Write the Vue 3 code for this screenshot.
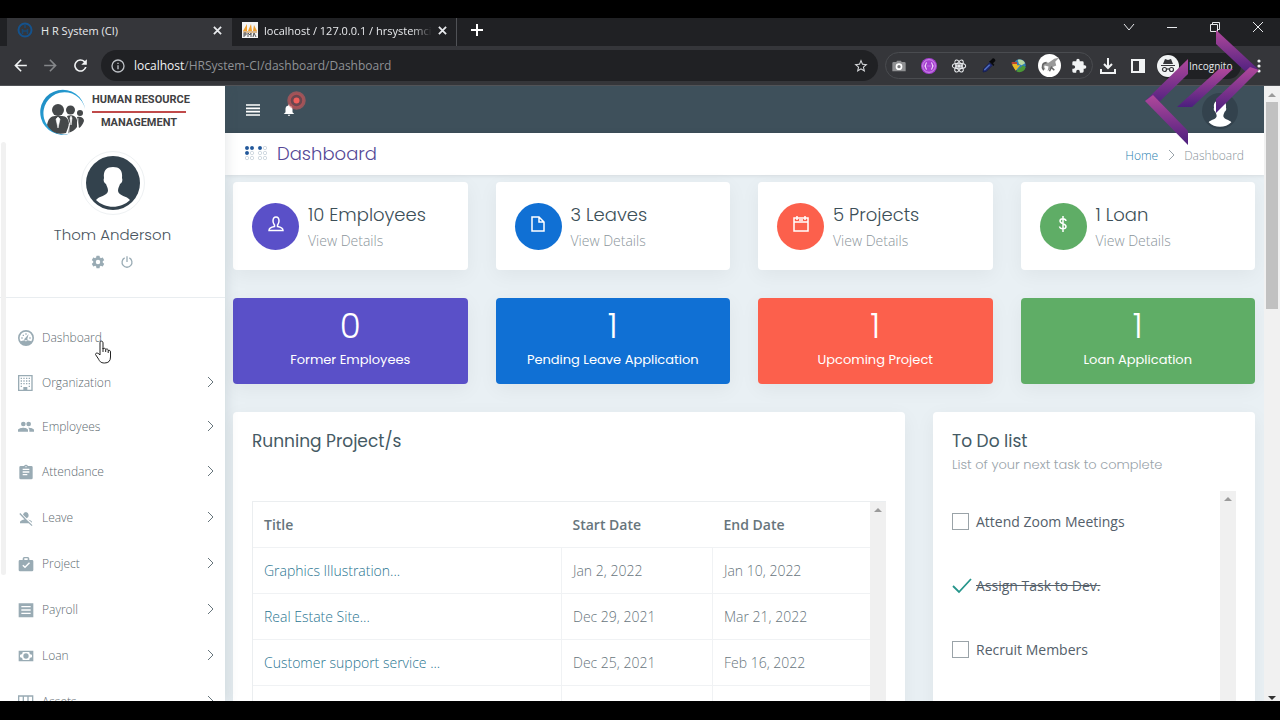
<template>
  <div class="screen">
    <header class="browser">
      <div class="tab-strip">
        <div class="tab tab-active">
          <svg class="favicon" viewBox="0 0 16 16">
            <circle cx="8" cy="8" r="6.5" fill="none" stroke="#15528c" stroke-width="2" />
            <path d="M5.5 12V7M10.5 12V7M5.5 9h5M8 3v3" stroke="#174873" stroke-width="1.6" />
          </svg>
          <span class="tab-title">H R System (CI)</span>
          <button class="tab-close" aria-label="Close tab"><svg viewBox="0 0 10 10"><path d="M1 1l8 8M9 1L1 9" /></svg></button>
        </div>
        <div class="tab tab-second">
          <svg class="favicon" viewBox="0 0 16 16">
            <rect width="16" height="16" fill="#f4f4f4" />
            <path d="M1 9L5 2v7zM6 9l3-7 1 7zM11 9l1-6 3 6z" fill="#f0a030" />
            <path d="M1 10h14" stroke="#c08030" />
            <path d="M2 15v-4h2v2H2M6 15v-4l2 2 1-2v4M11 15l1-4 2 4" fill="none" stroke="#555" />
          </svg>
          <span class="tab-title fading">localhost / 127.0.0.1 / hrsystemci</span>
          <button class="tab-close" aria-label="Close tab"><svg viewBox="0 0 10 10"><path d="M1 1l8 8M9 1L1 9" /></svg></button>
        </div>
        <button class="new-tab" aria-label="New tab"><svg viewBox="0 0 12 12"><path d="M6 0v12M0 6h12" /></svg></button>
        <div class="window-buttons">
          <button aria-label="Search tabs"><svg viewBox="0 0 12 12"><path d="M1 3l5 6 5-6" /></svg></button>
          <button aria-label="Minimize"><svg viewBox="0 0 12 12"><path d="M1 6.5h10" /></svg></button>
          <button aria-label="Restore"><svg viewBox="0 0 12 12"><path d="M1.5 3.5h7v7h-7zM3.5 3.5v-2h7v7h-2" /></svg></button>
          <button aria-label="Close"><svg viewBox="0 0 12 12"><path d="M1 1l10 10M11 1L1 11" /></svg></button>
        </div>
      </div>
      <div class="toolbar">
        <button class="nav-button" aria-label="Back"><svg viewBox="0 0 24 24"><path :d="paths.back" /></svg></button>
        <button class="nav-button muted" aria-label="Forward"><svg viewBox="0 0 24 24"><path :d="paths.forward" /></svg></button>
        <button class="nav-button" aria-label="Reload"><svg viewBox="0 0 24 24"><path :d="paths.reload" /></svg></button>
        <div class="address">
          <svg class="info" viewBox="0 0 24 24"><path :d="paths.info" /></svg>
          <span class="url"><b>localhost</b>/HRSystem-CI/dashboard/Dashboard</span>
          <button class="star" aria-label="Bookmark"><svg viewBox="0 0 24 24"><path :d="paths.star" /></svg></button>
        </div>
        <div class="extensions">
          <button aria-label="Camera">
            <svg viewBox="0 0 24 24"><path d="M4 6h4l1-2h6l1 2h4a2 2 0 0 1 2 2v12H2V8a2 2 0 0 1 2-2z" fill="#8f9092" /><circle cx="12" cy="13" r="5" fill="#fff" /><circle cx="12" cy="13" r="2.5" fill="#77787a" /></svg>
          </button>
          <button aria-label="JSON viewer">
            <svg viewBox="0 0 24 24"><circle cx="12" cy="12" r="12" fill="#a53fd0" /><circle cx="12" cy="12" r="9.500" fill="none" stroke="#e4b8f5" /><path d="M9 7c-3 0-1 4-3 5 2 1 0 5 3 5M15 7c3 0 1 4 3 5-2 1 0 5-3 5M10 12h1M13 12h1" fill="none" stroke="#f3dcfb" stroke-width="1.6" /></svg>
          </button>
          <button aria-label="React tools">
            <svg viewBox="0 0 24 24" fill="none" stroke="#e8eaed" stroke-width="1.6"><ellipse cx="12" cy="12" rx="10" ry="4" /><ellipse cx="12" cy="12" rx="10" ry="4" transform="rotate(60 12 12)" /><ellipse cx="12" cy="12" rx="10" ry="4" transform="rotate(120 12 12)" /><circle cx="12" cy="12" r="2" fill="#e8eaed" /></svg>
          </button>
          <button aria-label="Color picker">
            <svg viewBox="0 0 24 24"><path d="M3 21l1-5 9-9 4 4-9 9z" fill="#202b70" stroke="#111a50" /><path d="M5 18l8-8" stroke="#5272c4" stroke-width="2" /><path d="M12 5l7 7 1-2-2-2 3-3c2-2-2-6-4-4l-3 3z" fill="#08090c" /></svg>
          </button>
          <button aria-label="Download manager">
            <svg viewBox="0 0 24 24"><circle cx="13" cy="11" r="9" fill="#327fb8" /><path d="M10 3c4-2 10 1 11 5l-5 3-4-2z" fill="#b8d9a0" /><path d="M2 7h7v4h5l-7 8-5-8z" fill="#e9b927" /><path d="M8 20l10-9 4 3c-2 7-9 9-14 6z" fill="#4b9936" /><path d="M1 6h8v3H1z" fill="#b94532" /></svg>
          </button>
          <button class="round" aria-label="Gnu extension">
            <svg viewBox="0 0 24 24"><circle cx="12" cy="12" r="12" fill="#fff" /><path d="M5 16c-1-5 1-8 6-7l6-4 5-1-4 4 1 4-5 2-4 4 1-5-4-1c-1 1 0 3 1 4z" fill="#999" /><path d="M6 17c-3-4-1-8 3-8M12 18l2-4 3 3" fill="none" stroke="#666" stroke-width="1.6" /></svg>
          </button>
          <button aria-label="Extensions"><svg viewBox="0 0 24 24" fill="#f1f3f4"><path :d="paths.puzzle" /></svg></button>
        </div>
        <button class="tool" aria-label="Downloads"><svg viewBox="0 0 18 18" fill="none" stroke="#f1f3f4" stroke-width="2"><path d="M9 1v10M5 7l4 4 4-4M2 12v4h14v-4" /></svg></button>
        <button class="tool" aria-label="Side panel"><svg viewBox="0 0 18 18"><path d="M3 3h12v12H3z" fill="none" stroke="#f1f3f4" stroke-width="2" /><path d="M10 3h5v12h-5z" fill="#f1f3f4" /></svg></button>
        <div class="incognito">
          <svg viewBox="0 0 22 22"><circle cx="11" cy="11" r="11" fill="#f1f3f4" /><path d="M4 10h14v1H4zM6 9l2-5 3 1 3-1 2 5z" fill="#35363a" /><g fill="none" stroke="#35363a" stroke-width="1.2"><circle cx="7.500" cy="14.500" r="2" /><circle cx="14.500" cy="14.500" r="2" /><path d="M9.500 14h3" /></g></svg>
          <span>Incognito</span>
        </div>
        <button class="menu-dots" aria-label="Browser menu"><svg viewBox="0 0 4 16"><circle cx="2" cy="3" r="1.6" /><circle cx="2" cy="8" r="1.6" /><circle cx="2" cy="13" r="1.6" /></svg></button>
      </div>
    </header>

    <div class="app">
      <aside class="sidebar">
        <div class="scroll-strip"></div>
        <a class="logo" href="#">
          <svg class="emblem" viewBox="0 0 46 46">
            <defs>
              <linearGradient id="ring" x1="0" y1="0" x2="1" y2="1">
                <stop offset="0" stop-color="#1b86bd" /><stop offset="0.500" stop-color="#2aa3d8" /><stop offset="1" stop-color="#157bb5" />
              </linearGradient>
            </defs>
            <path d="M30 44.500A22.500 22.500 0 1 1 45 20A21 21 0 1 0 30 44.500z" fill="url(#ring)" />
            <g fill="#45484a">
              <path d="M7 36c1-6 4-9 8-9h7c4 0 7 3 7 9l-3 8c-8 2-14 0-19-8z" />
              <circle cx="18" cy="21" r="6" />
              <path d="M27 27c5-2 9 0 10 4v7c-2 3-5 5-9 6l2-9z" />
              <circle cx="30.500" cy="21" r="4.500" />
              <path d="M37 28c4-1 7 1 7 4-1 3-3 6-5 7z" />
              <circle cx="40" cy="24" r="3" />
            </g>
            <path d="M18 28l-2 2 2 9 2-9zM31 27l-1 2 1 7 1-7zM29 35v9M38 29v8" fill="#fff" stroke="#fff" stroke-width="0.600" />
          </svg>
          <span class="logo-text"><b>HUMAN RESOURCE</b><b>MANAGEMENT</b></span>
        </a>
        <div class="profile">
          <div class="ring">
            <svg viewBox="0 0 54 54"><circle cx="27" cy="27" r="27" fill="#33424d" /><path :d="paths.person" fill="#fff" /></svg>
          </div>
          <h5>Thom Anderson</h5>
          <div class="profile-links">
            <a href="#" aria-label="Settings"><svg viewBox="1 1 22 22"><path :d="paths.gear" /></svg></a>
            <a href="#" aria-label="Log out"><svg viewBox="0 0 24 24"><path d="M8 5a8.500 8.500 0 1 0 8 0M12 2v10" fill="none" stroke="#99abb4" stroke-width="2.200" /></svg></a>
          </div>
        </div>
        <nav>
          <a v-for="item in menu" :key="item.label" href="#" :class="{ compact: item.compact }">
            <svg class="menu-icon" viewBox="0 0 24 24" fill-rule="evenodd"><path :d="item.icon" /></svg>
            <span>{{ item.label }}</span>
            <svg v-if="item.sub" class="chevron" viewBox="0 0 10 10"><path d="M3 0l5 5-5 5" /></svg>
          </a>
        </nav>
        <!-- mouse pointer -->
        <svg class="pointer" viewBox="0 0 16 24"><path d="M5 15V3c0-2.500 3-2.500 3 0v6c1-1 2.500-1 2.700 0.500C12 8.500 13 9 13.200 10.500c1.300-0.500 2.300 0 2.300 1.500v5c0 4-2 6-6 6s-5-2-6-4l-3-4.500c0-2 2.500-2 4.500 0.500zM8 8v4M10.700 9.500V12M13.200 10.500V13" fill="#fff" stroke="#222" /></svg>
      </aside>

      <main>
        <div class="topbar">
          <button aria-label="Toggle menu"><svg class="burger" viewBox="0 0 14 12"><path d="M0 1h14M0 4.300h14M0 7.700h14M0 11h14" /></svg></button>
          <button class="bell" aria-label="Notifications">
            <svg class="bell-icon" viewBox="0 0 24 24"><path :d="paths.bell" /></svg>
            <svg class="pulse" viewBox="0 0 19 19">
              <circle cx="9.500" cy="9.500" r="7.500" fill="#8a3f47" fill-opacity="0.600" stroke="#d25a5c" stroke-opacity="0.600" stroke-width="3.500" />
              <circle cx="9.500" cy="9.500" r="3" fill="#ef5f5b" />
            </svg>
          </button>
          <svg class="user" viewBox="0 0 54 54"><circle cx="27" cy="27" r="27" fill="#33424d" /><path :d="paths.person" fill="#fff" /></svg>
        </div>

        <div class="titlebar">
          <svg class="braille" viewBox="0 0 22 16">
            <circle v-for="d in dots" :key="d.x + '-' + d.y" :cx="d.x" :cy="d.y" r="1.700" :class="{ on: d.on }" />
          </svg>
          <h3>Dashboard</h3>
          <div class="crumbs">
            <a href="#">Home</a>
            <svg viewBox="0 0 10 10"><path d="M3 0l5 5-5 5" /></svg>
            <span>Dashboard</span>
          </div>
        </div>

        <div class="content">
          <section v-for="s in stats" :key="s.title" class="card stat">
            <div class="bubble" :class="s.color"><svg viewBox="0 0 16 16"><path :d="s.icon" /></svg></div>
            <div class="stat-text">
              <h3>{{ s.title }}</h3>
              <a href="#">View Details</a>
            </div>
          </section>

          <section v-for="t in tiles" :key="t.label" class="tile" :class="t.color">
            <h1>{{ t.count }}</h1>
            <h6>{{ t.label }}</h6>
          </section>

          <section class="card projects">
            <h4>Running Project/s</h4>
            <div class="scroll-box">
              <table>
                <thead>
                  <tr><th class="col-title">Title</th><th class="col-start">Start Date</th><th>End Date</th></tr>
                </thead>
                <tbody>
                  <tr v-for="p in projects" :key="p.title">
                    <td><a href="#">{{ p.title }}</a></td>
                    <td>{{ p.start }}</td>
                    <td>{{ p.end }}</td>
                  </tr>
                </tbody>
              </table>
              <div class="scrollbar"><i class="arrow-up"></i></div>
            </div>
          </section>

          <section class="card todo">
            <h4>To Do list</h4>
            <p>List of your next task to complete</p>
            <div class="scroll-box">
              <ul>
                <li v-for="(t, i) in todos" :key="t.label">
                  <span class="tick">
                    <input :id="'todo-' + i" v-model="t.done" type="checkbox">
                    <svg v-if="t.done" viewBox="0 0 20 18"><path d="M1 9l6 6L19 2" /></svg>
                  </span>
                  <label :for="'todo-' + i" :class="{ done: t.done }">{{ t.label }}</label>
                </li>
              </ul>
              <div class="scrollbar"><i class="arrow-up"></i></div>
            </div>
          </section>
        </div>
      </main>

      <div class="page-scroll">
        <i class="arrow-up"></i>
        <div class="thumb"></div>
        <i class="arrow-down"></i>
      </div>
    </div>

    <svg class="watermark" viewBox="0 0 114 116">
      <defs>
        <linearGradient id="purple" x1="0" y1="0" x2="0" y2="1">
          <stop offset="0" stop-color="#b0489b" /><stop offset="1" stop-color="#4c1f7e" />
        </linearGradient>
      </defs>
      <g fill="url(#purple)">
        <path d="M71 0L113 39L103 44L71 14z" />
        <path d="M71 69L105 37L114 40L71 83z" />
        <path d="M32 77L74 39H88L47 77z" />
        <path d="M43 29V44L10 76L0 71z" />
        <path d="M0 71L8 65L43 101V115z" />
      </g>
    </svg>
  </div>
</template>

<script setup>
import { ref } from 'vue';

const paths = {
  back: 'M20 11v2H8l5.500 5.500-1.420 1.420L4.160 12l7.920-7.920L13.500 5.500 8 11z',
  forward: 'M4 11v2h12l-5.500 5.500 1.420 1.420L19.840 12l-7.920-7.920L10.500 5.500 16 11z',
  reload: 'M17.650 6.350A8 8 0 1 0 19.730 14h-2.080A6 6 0 1 1 16.220 7.780L13 11h7V4z',
  info: 'M11 9h2V7h-2zM12 20a8 8 0 1 1 0-16 8 8 0 0 1 0 16zM12 2a10 10 0 1 0 0 20 10 10 0 0 0 0-20zM11 17h2v-6h-2z',
  star: 'M12 15.390l-3.760 2.270.990-4.280-3.320-2.880 4.380-.370L12 6.090l1.710 4.040 4.380.370-3.320 2.880.990 4.280M22 9.240l-7.190-.610L12 2 9.190 8.630 2 9.240l5.450 4.730L5.820 21 12 17.270 18.180 21l-1.640-7.030z',
  puzzle: 'M20.500 11H19V7a2 2 0 0 0-2-2h-4V3.500a2.500 2.500 0 0 0-5 0V5H4a2 2 0 0 0-2 2v3.800h1.500a2.700 2.700 0 0 1 0 5.400H2V20a2 2 0 0 0 2 2h3.800v-1.500a2.700 2.700 0 0 1 5.400 0V22H17a2 2 0 0 0 2-2v-4h1.500a2.500 2.500 0 0 0 0-5z',
  bell: 'M14 20a2 2 0 0 1-4 0zM12 2a1 1 0 0 1 1 1v1.080A6 6 0 0 1 18 10v6l3 3H3l3-3v-6a6 6 0 0 1 5-5.920V3a1 1 0 0 1 1-1z',
  person: 'M27 11c-6 0-10 3-9 11-1 2 0 5 2 6 1 3 2 4 2 7-1 5-9 5-12 9 9 9 25 9 34 0-3-4-11-4-12-9 0-3 1-4 2-7 2-1 3-4 2-6 1-8-3-11-9-11z',
  gear: 'M12 15.500A3.500 3.500 0 1 1 12 8.500a3.500 3.500 0 0 1 0 7M19.430 12.970c.040-.320.070-.640.070-.970s-.030-.660-.070-1l2.110-1.630c.190-.150.240-.420.120-.640l-2-3.460c-.120-.220-.390-.310-.610-.220l-2.490 1c-.520-.390-1.060-.730-1.690-.980l-.370-2.650A.500.500 0 0 0 14 2h-4a.500.500 0 0 0-.500.420l-.370 2.650c-.630.250-1.170.590-1.690.980l-2.490-1c-.220-.090-.490 0-.610.220l-2 3.460c-.130.220-.070.490.120.640L4.570 11c-.040.340-.070.670-.070 1s.030.650.070.970l-2.110 1.660c-.190.150-.250.420-.120.640l2 3.460c.120.220.390.300.610.220l2.490-1.010c.520.400 1.060.740 1.690.990l.370 2.650c.040.240.250.420.500.420h4c.250 0 .460-.180.500-.420l.370-2.650c.630-.260 1.170-.590 1.690-.990l2.490 1.010c.220.080.490 0 .610-.220l2-3.460c.120-.220.070-.490-.120-.640z'
};

const menu = [
  {
    label: 'Dashboard',
    icon: 'M12 0a12 12 0 1 0 0 24 12 12 0 0 0 0-24zM12 2.500a9.500 9.500 0 0 1 8 14.500c-5-2-11-2-16 0a9.500 9.500 0 0 1 8-14.500zM11 5h2v2h-2zM5 11h2v2H5zM17 11h2v2h-2zM7 7h2v2H7zM16 6l-2 7a2.500 2.500 0 1 1-3-1z'
  },
  {
    label: 'Organization', sub: true, compact: true,
    icon: 'M0 0h22v24H0zM2 2v20h6v-4h6v4h6V2zM4 4h2v2H4zM8 4h2v2H8zM12 4h2v2h-2zM16 4h2v2h-2zM4 8h2v2H4zM8 8h2v2H8zM12 8h2v2h-2zM16 8h2v2h-2zM4 12h2v2H4zM8 12h2v2H8zM12 12h2v2h-2zM16 12h2v2h-2zM4 16h2v2H4zM16 16h2v2h-2z'
  },
  {
    label: 'Employees', sub: true, compact: true,
    icon: 'M16 13l-.970.050C16.190 13.890 17 15 17 16.500V19h7v-2.500c0-2.330-5.670-3.500-8-3.500M8 13c-2.330 0-8 1.170-8 3.500V19h15v-2.500C15 14.170 10.330 13 8 13M8 11a3.500 3.500 0 1 0 0-7 3.500 3.500 0 0 0 0 7M16 11a3.500 3.500 0 1 0 0-7 3.500 3.500 0 0 0 0 7z'
  },
  {
    label: 'Attendance', sub: true,
    icon: 'M17 9H7V7h10zM17 13H7v-2h10zM14 17H7v-2h7zM12 3a1 1 0 1 1 0 2 1 1 0 0 1 0-2M20 3h-5.180a3 3 0 0 0-5.640 0H4a2 2 0 0 0-2 2v16a2 2 0 0 0 2 2h16a2 2 0 0 0 2-2V5a2 2 0 0 0-2-2z'
  },
  {
    label: 'Leave', sub: true,
    icon: 'M12 3a5 5 0 0 1 1 9.500L7.500 7A5 5 0 0 1 12 3M12.280 14l9.440 9L20.500 24l-4.500-4H3v-2c0-1.840 3.500-3.390 6.870-3.860L2 6l1.500-1.500zM21 18v1.180l-5.860-4.860C18 14.930 21 16.350 21 18z'
  },
  {
    label: 'Project', sub: true,
    icon: 'M10.500 18.500L6.500 14.500l1.500-1.500 2.500 2.500 6-6 1.500 1.500M9.500 3.500h5V6h-5M21 6h-4V4a2.500 2.500 0 0 0-2.500-2.500h-5A2.500 2.500 0 0 0 7 4v2H3a2 2 0 0 0-2 2v13a2 2 0 0 0 2 2h18a2 2 0 0 0 2-2V8a2 2 0 0 0-2-2z'
  },
  {
    label: 'Payroll', sub: true,
    icon: 'M1 2h22v21H1zM5 6v2h14V6zM5 11v2h14v-2zM5 16v2h14v-2z'
  },
  {
    label: 'Loan', sub: true,
    icon: 'M1 4h22v16H1zM3 6v12h18V6zM12 8a4 4 0 1 1 0 8 4 4 0 0 1 0-8M3 6h4a4 4 0 0 1-4 4zM17 6h4v4a4 4 0 0 1-4-4zM3 14a4 4 0 0 1 4 4H3zM21 14v4h-4a4 4 0 0 1 4-4z'
  },
  {
    label: 'Assets', sub: true,
    icon: 'M0 2h23v20H0zM2 4v7h5V4zM9 4v7h5V4zM16 4v7h5V4zM2 13v7h5v-7zM9 13v7h5v-7zM16 13v7h5v-7z'
  }
];

const stats = [
  { title: '10 Employees', color: 'purple', icon: 'M8 1C5 1 5 4 5 5c0 2 1 3 1.500 4v1.500C3 11 1 12 1 14.500h14c0-2.500-2-3.500-5.500-4V9C10 8 11 7 11 5c0-1 0-4-3-4z' },
  { title: '3 Leaves', color: 'blue', icon: 'M2 1h7l5 5v9H2zM9 1v5h5' },
  { title: '5 Projects', color: 'red', icon: 'M1 2h14v13H1zM1 6h14M4 0v4M12 0v4M6 4h4' },
  { title: '1 Loan', color: 'green', icon: 'M11 5c-.500-3-6-3-6 0 0 3.500 6 2 6 5.500 0 3-6 3-6.500 0M8 0v16' }
];

const tiles = [
  { count: 0, label: 'Former Employees', color: 'purple' },
  { count: 1, label: 'Pending Leave Application', color: 'blue' },
  { count: 1, label: 'Upcoming Project', color: 'red' },
  { count: 1, label: 'Loan Application', color: 'green' }
];

const projects = [
  { title: 'Graphics Illustration...', start: 'Jan 2, 2022', end: 'Jan 10, 2022' },
  { title: 'Real Estate Site...', start: 'Dec 29, 2021', end: 'Mar 21, 2022' },
  { title: 'Customer support service ...', start: 'Dec 25, 2021', end: 'Feb 16, 2022' },
  { title: '', start: '', end: '' }
];

const todos = ref([
  { label: 'Attend Zoom Meetings', done: false },
  { label: 'Assign Task to Dev.', done: true },
  { label: 'Recruit Members', done: false }
]);

// braille dots in front of the page title
const dots = [];
[2, 7, 15, 20].forEach((x) => {
  [2, 7, 12].forEach((y) => {
    dots.push({ x, y, on: (y === 2 && x !== 20) || (x === 2 && y === 7) });
  });
});
</script>

<style>
body {
  background: #000;
}
</style>

<style scoped>
* {
  box-sizing: border-box;
}

h1, h3, h4, h5, h6, p, ul {
  margin: 0;
  padding: 0;
  font-weight: 400;
}

h1, h3, h4, h5, h6, p {
  font-family: Poppins, Inter, sans-serif;
}

a {
  text-decoration: none;
}

button {
  display: flex;
  align-items: center;
  justify-content: center;
  flex-shrink: 0;
  padding: 0;
  border: 0;
  background: none;
}

svg {
  display: block;
  flex-shrink: 0;
}

.screen {
  position: relative;
  display: flex;
  flex-direction: column;
  height: 100vh;
  padding: 18px 0 19px;
  overflow: hidden;
  background: #000;
  font-family: "Segoe UI", "Open Sans", sans-serif;
  font-size: 14px;
}

/* browser */
.browser {
  flex-shrink: 0;
  background: #35363a;
  border-bottom: 1px solid #515357;
  color: #e8eaed;
  font-size: 11px;
}

.tab-strip {
  display: flex;
  height: 28px;
  padding: 0 1px 0 7px;
  background: #202124;
}

.tab {
  display: flex;
  align-items: center;
  gap: 8px;
  width: 225px;
  padding: 0 10px 4px;
}

.tab-active {
  background: #35363a;
}

.tab-second {
  gap: 6px;
  border-right: 1px solid #505256;
}

.favicon {
  width: 16px;
  height: 16px;
}

.tab-title {
  flex: 1;
  white-space: nowrap;
}

/* the tail of a long title fades out */
.fading {
  -webkit-mask-image: linear-gradient(90deg, #000 88%, transparent);
  mask-image: linear-gradient(90deg, #000 88%, transparent);
}

.tab-close svg {
  width: 9px;
  height: 9px;
  stroke: #e8eaed;
  stroke-width: 2;
}

.new-tab {
  width: 40px;
  padding-bottom: 4px;
}

.new-tab svg {
  width: 12px;
  height: 12px;
  stroke: #fff;
  stroke-width: 2;
}

.window-buttons {
  display: flex;
  align-items: flex-start;
  margin-left: auto;
}

.window-buttons button {
  width: 43px;
  height: 18px;
}

.window-buttons svg {
  width: 12px;
  height: 12px;
  fill: none;
  stroke: #e8eaed;
}

.toolbar {
  display: flex;
  align-items: center;
  height: 39px;
  padding: 0 11px 0 5px;
}

.nav-button {
  width: 30px;
}

.nav-button svg {
  width: 19px;
  height: 19px;
  fill: #f1f3f4;
}

.muted svg {
  fill: #85878a;
}

.address {
  display: flex;
  flex: 1;
  align-items: center;
  gap: 8px;
  height: 31px;
  margin-left: 6px;
  padding: 0 9px;
  border-radius: 16px;
  background: #202124;
}

.info {
  width: 16px;
  height: 16px;
  fill: #bdc1c6;
}

.url {
  flex: 1;
  color: #8f9296;
  font-size: 12px;
}

.url b {
  color: #f1f3f4;
  font-weight: 400;
}

.star svg {
  width: 16px;
  height: 16px;
  fill: #d5d7da;
}

.extensions {
  display: flex;
  align-items: center;
  justify-content: center;
  width: 208px;
  height: 27px;
  margin-left: 7px;
  border: 1px solid #4a4c50;
  border-radius: 14px;
}

.extensions button {
  width: 30px;
}

.extensions svg {
  width: 16px;
  height: 16px;
}

.extensions .round svg {
  width: 23px;
  height: 23px;
}

.tool {
  width: 30px;
}

.tool svg {
  width: 18px;
  height: 18px;
}

.incognito {
  display: flex;
  align-items: center;
  gap: 10px;
  width: 84px;
  height: 26px;
  margin-left: 4px;
  border-radius: 13px;
  background: #202124;
}

.incognito svg {
  width: 22px;
  height: 22px;
}

.incognito span {
  font-size: 10px;
}

.menu-dots {
  width: 20px;
  margin-left: 8px;
}

.menu-dots svg {
  width: 4px;
  height: 16px;
  fill: #f1f3f4;
}

/* sidebar */
.app {
  display: flex;
  flex: 1;
  min-height: 0;
  overflow: hidden;
}

.sidebar {
  position: relative;
  z-index: 1;
  flex: 0 0 225px;
  background: #fff;
  box-shadow: 1px 0 12px rgba(60, 80, 90, 0.15);
}

.scroll-strip {
  position: absolute;
  top: 56px;
  left: 1px;
  width: 5px;
  height: 433px;
  border-radius: 3px;
  background: #f1f1f1;
}

.logo {
  display: flex;
  align-items: center;
  gap: 6px;
  height: 56px;
  padding: 0 0 5px 40px;
}

.emblem {
  width: 46px;
  height: 46px;
}

.logo-text {
  width: 94px;
  color: #3f4143;
  font-family: Roboto, "Liberation Sans", sans-serif;
  font-size: 11px;
  line-height: 20px;
  text-align: center;
  white-space: nowrap;
}

.logo-text b {
  display: block;
}

.logo-text b + b {
  margin-top: 1px;
  border-top: 2px solid #c04a4a;
}

.profile {
  padding: 9px 0 28px;
  border-bottom: 1px solid #e9edf0;
}

.ring {
  width: 64px;
  height: 64px;
  margin: 0 auto;
  padding: 4px;
  border: 1px solid #eef1f3;
  border-radius: 50%;
}

.ring svg {
  width: 54px;
  height: 54px;
}

.profile h5 {
  margin-top: 8px;
  color: #4b565f;
  font-size: 15px;
  font-weight: 300;
  line-height: 24px;
  text-align: center;
}

.profile-links {
  display: flex;
  justify-content: center;
  gap: 15px;
  margin-top: 8px;
}

.profile-links svg {
  width: 14px;
  height: 14px;
  fill: #99abb4;
}

nav {
  padding-top: 16px;
}

nav a {
  display: flex;
  align-items: center;
  gap: 8px;
  height: 46px;
  padding: 0 10px 0 18px;
  color: #5c696f;
  font-weight: 300;
  font-size: 12px;
}

nav .compact {
  height: 44px;
}

nav span {
  flex: 1;
}

.menu-icon {
  width: 16px;
  height: 16px;
  margin-top: 2px;
  fill: #99abb4;
}

.chevron {
  width: 10px;
  height: 10px;
  fill: none;
  stroke: #67757c;
}

.pointer {
  position: absolute;
  top: 254px;
  left: 95px;
  width: 16px;
  height: 24px;
}

/* main column */
main {
  flex: 1;
  min-width: 0;
  background: #e9f0f4;
}

.topbar {
  display: flex;
  align-items: center;
  gap: 22px;
  height: 47px;
  padding: 0 26px 0 21px;
  background: #3e505b;
}

.burger {
  width: 14px;
  height: 12px;
  stroke: #fff;
  stroke-width: 1.7;
}

.bell {
  position: relative;
}

.bell-icon {
  width: 14px;
  height: 14px;
  fill: #fff;
}

.pulse {
  position: absolute;
  top: -12px;
  left: 5px;
  width: 19px;
  height: 19px;
}

.user {
  width: 36px;
  height: 36px;
  margin: 2px 0 0 auto;
}

.titlebar {
  display: flex;
  align-items: center;
  height: 42px;
  padding: 0 20px;
  background: #fff;
  box-shadow: 1px 0 5px rgba(0, 0, 0, 0.12);
}

.titlebar h3 {
  margin-left: 10px;
  color: #554896;
  font-size: 18px;
  font-weight: 300;
  line-height: 24px;
}

.braille {
  width: 22px;
  height: 16px;
  fill: none;
  stroke: #b5c3cf;
  stroke-width: 0.6;
}

.braille .on {
  fill: #22589b;
  stroke: #22589b;
}

.crumbs {
  display: flex;
  align-items: center;
  gap: 8px;
  margin-left: auto;
  padding-top: 2px;
  color: #89939a;
  font-size: 12px;
  font-weight: 300;
}

.crumbs a {
  color: #2a7fb0;
}

.crumbs svg {
  width: 10px;
  height: 10px;
  fill: none;
  stroke: #99a3aa;
}

.content {
  display: grid;
  grid-template-columns: repeat(12, 1fr);
  gap: 28px;
  padding: 7px 9px 0 8px;
}

.card {
  border-radius: 4px;
  background: #fff;
  box-shadow: 0 5px 20px rgba(0, 0, 0, 0.05);
}

.stat {
  display: flex;
  grid-column: span 3;
  align-items: center;
  gap: 9px;
  height: 88px;
  padding: 0 19px;
}

.stat-text {
  padding-top: 3px;
}

.bubble {
  display: flex;
  align-items: center;
  justify-content: center;
  width: 47px;
  height: 47px;
  padding-bottom: 4px;
  border-radius: 50%;
}

.bubble svg {
  width: 16px;
  height: 16px;
  fill: none;
  stroke: #fff;
  stroke-width: 1.5;
}

.purple {
  background: #5a50c8;
}

.blue {
  background: #1070d4;
}

.red {
  background: #fc604c;
}

.green {
  background: #5fad66;
}

.stat h3 {
  color: #3c4f58;
  font-size: 18px;
  font-weight: 300;
  line-height: 26px;
}

.stat a {
  display: block;
  color: #8b959b;
  font-weight: 300;
  line-height: 26px;
}

.tile {
  grid-column: span 3;
  height: 86px;
  padding-top: 7px;
  border-radius: 4px;
  box-shadow: 0 5px 20px rgba(0, 0, 0, 0.05);
  color: #fff;
  text-align: center;
}

.tile h1 {
  font-size: 34px;
  font-weight: 300;
  line-height: 42px;
}

.tile h6 {
  font-size: 13px;
  line-height: 26px;
}

.projects {
  grid-column: span 8;
  padding: 16px 19px;
}

.todo {
  grid-column: span 4;
  padding: 16px 19px;
}

.card h4 {
  color: #455a64;
  font-size: 17px;
  line-height: 26px;
}

.todo p {
  color: #99a3aa;
  font-size: 13px;
  font-weight: 300;
  line-height: 22px;
}

.scroll-box {
  display: flex;
}

.scrollbar {
  flex: 0 0 16px;
  padding-top: 6px;
  background: #f0f0f0;
}

.arrow-up {
  display: block;
  width: 0;
  margin: 0 auto;
  border: 4px solid transparent;
  border-top-width: 0;
  border-bottom-color: #9b9b9b;
}

.projects .scroll-box {
  margin-top: 47px;
  border: 1px solid #ebeef0;
  border-width: 1px 0 0 1px;
}

table {
  flex: 1;
  border-collapse: collapse;
  table-layout: fixed;
  color: #67757c;
}

th, td {
  height: 46px;
  padding: 0 11px;
  border-bottom: 1px solid #f0f2f4;
  text-align: left;
}

th {
  height: 45px;
  font-weight: 600;
}

td {
  font-weight: 300;
}

td + td {
  border-left: 1px solid #f0f2f4;
}

td a {
  color: #2a7591;
}

.col-title {
  width: 50%;
}

.col-start {
  width: 151px;
}

.todo .scroll-box {
  height: 230px;
  margin-top: 15px;
}

ul {
  flex: 1;
  list-style: none;
}

li {
  display: flex;
  align-items: center;
  gap: 7px;
  height: 60px;
  margin-bottom: 4px;
}

.tick {
  display: grid;
  width: 17px;
  height: 17px;
}

.tick input {
  grid-area: 1 / 1;
  width: 17px;
  height: 17px;
  margin: 0;
  border: 1px solid #9aa3a8;
  appearance: none;
}

.tick input:checked {
  border-color: transparent;
}

.tick svg {
  grid-area: 1 / 1;
  width: 20px;
  height: 18px;
  fill: none;
  stroke: #26958b;
  stroke-width: 1.8;
}

li label {
  color: #54606a;
}

.done {
  text-decoration: line-through;
}

.page-scroll {
  display: flex;
  flex: 0 0 16px;
  flex-direction: column;
  gap: 5px;
  padding: 7px 2px 0;
  background: #f1f1f1;
}

.thumb {
  height: 207px;
  background: #c1c1c1;
}

.arrow-down {
  width: 0;
  margin: auto auto 1px;
  border: 4px solid transparent;
  border-bottom-width: 0;
  border-top-color: #333;
}

.watermark {
  position: absolute;
  top: 30px;
  right: 21px;
  width: 114px;
  height: 116px;
}
</style>
